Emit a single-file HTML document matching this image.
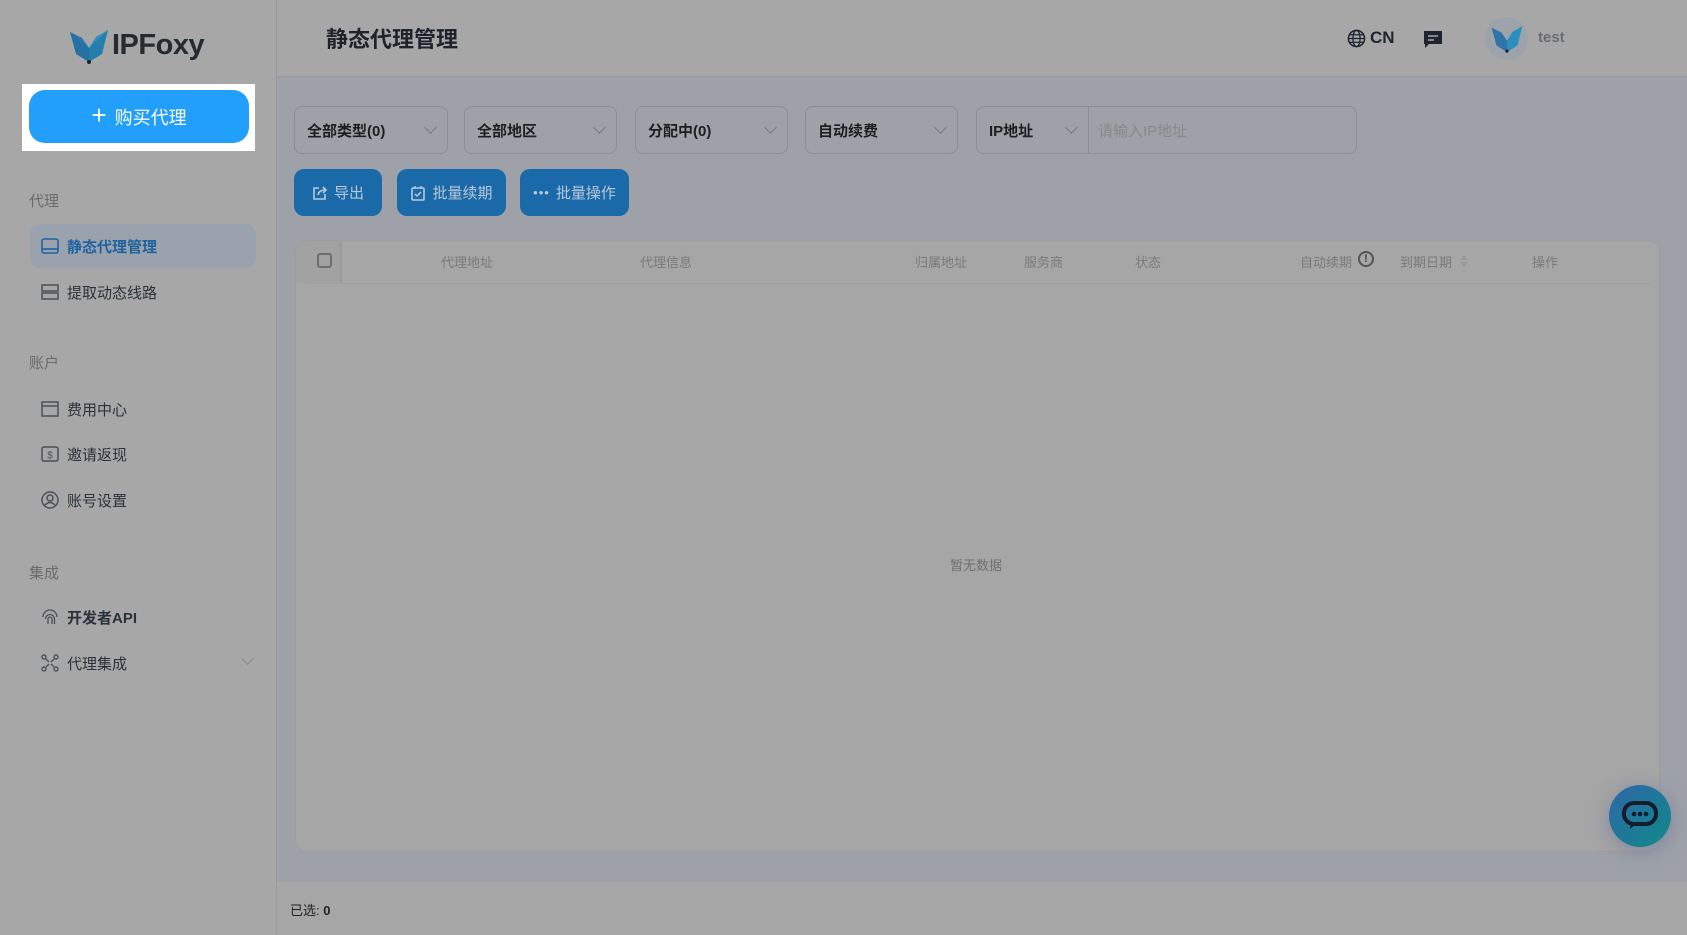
<!DOCTYPE html>
<html><head><meta charset="utf-8"><style>
*{box-sizing:border-box;margin:0;padding:0}
body{width:1687px;height:935px;overflow:hidden;background:#9ea2a8;font-family:"Liberation Sans","Noto Sans CJK SC",sans-serif;position:relative;color:#2a2f36}
.abs{position:absolute}
.side{left:0;top:0;width:277px;height:935px;background:#a7a7a7;border-right:1px solid #999}
.head{left:277px;top:0;width:1410px;height:77px;background:#a7a7a7;border-bottom:1px solid #9a9a9a}
.lbl{font-size:15px;color:#6b6b6b;left:29px}
.mi{left:30px;width:226px;height:44px;font-size:15px;color:#2b313a;display:flex;align-items:center;padding-left:10px;gap:7px}
.mi svg{width:20px;height:20px}
.sel{background:#fff0;border:1px solid #8e8e8e;border-radius:8px;height:48px;top:106px;display:flex;align-items:center;padding:0 12px;font-size:15px;color:#1e1e1e;font-weight:600;justify-content:space-between}
.chev{width:9px;height:9px;border-right:1.5px solid #777;border-bottom:1.5px solid #777;transform:rotate(45deg);margin-top:-5px}
.btn{top:169px;height:47px;border-radius:10px;background:#1a69a8;color:#b9c9d8;font-size:15px;display:flex;align-items:center;justify-content:center;gap:6px}
.th{top:252px;font-size:13px;color:#7a7a7a}
</style></head><body>
<div class="abs side"></div>
<svg class="abs" style="left:68px;top:28px" width="42" height="36" viewBox="0 0 42 36"><path d="M2 4 L14 10 L21 20 L21 34 L8 26 Z" fill="#2f73a8"/><path d="M40 2 L28 9 L21 20 L21 34 L34 26 Z" fill="#2a8fc0"/><path d="M2 4 L21 20 L40 2 L34 26 L21 34 L8 26Z" fill="#1d6f9e" opacity=".5"/><circle cx="21" cy="34" r="2" fill="#222"/></svg>
<div class="abs" style="left:112px;top:29px;font-size:29px;font-weight:900;color:#262a31;letter-spacing:-0.5px">IPFoxy</div>
<div class="abs" style="left:22px;top:84px;width:233px;height:67px;background:#fff"></div>
<div class="abs" style="left:29px;top:90px;width:220px;height:53px;background:#229ffa;border-radius:16px;color:#fff;font-size:18px;display:flex;align-items:center;justify-content:center;gap:8px"><span style="font-size:26px;font-weight:300;line-height:1;margin-top:-3px">+</span>购买代理</div>
<div class="abs lbl" style="top:190px">代理</div>
<div class="abs mi" style="top:224px;background:#9aa3ad;border-radius:10px;color:#1f62a0;font-weight:bold"><svg viewBox="0 0 20 20"><rect x="2" y="3" width="16" height="14" rx="2" fill="none" stroke="#1f62a0" stroke-width="1.6"/><line x1="2" y1="13" x2="18" y2="13" stroke="#1f62a0" stroke-width="1.6"/></svg>静态代理管理</div>
<div class="abs mi" style="top:270px"><svg viewBox="0 0 20 20"><rect x="2" y="3" width="16" height="6" fill="none" stroke="#4a5058" stroke-width="1.5"/><rect x="2" y="11" width="16" height="6" fill="none" stroke="#4a5058" stroke-width="1.5"/></svg>提取动态线路</div>
<div class="abs lbl" style="top:352px">账户</div>
<div class="abs mi" style="top:387px"><svg viewBox="0 0 20 20"><rect x="2" y="3" width="16" height="14" fill="none" stroke="#4a5058" stroke-width="1.5"/><line x1="2" y1="7" x2="18" y2="7" stroke="#4a5058" stroke-width="1.5"/></svg>费用中心</div>
<div class="abs mi" style="top:432px"><svg viewBox="0 0 20 20"><rect x="2" y="3" width="16" height="14" rx="2" fill="none" stroke="#4a5058" stroke-width="1.5"/><text x="10" y="14.5" font-size="10" text-anchor="middle" fill="#4a5058" font-family="Liberation Sans">$</text></svg>邀请返现</div>
<div class="abs mi" style="top:478px"><svg viewBox="0 0 20 20"><circle cx="10" cy="10" r="8" fill="none" stroke="#4a5058" stroke-width="1.5"/><circle cx="10" cy="8" r="3" fill="none" stroke="#4a5058" stroke-width="1.5"/><path d="M5 15 Q10 10 15 15" fill="none" stroke="#4a5058" stroke-width="1.5"/></svg>账号设置</div>
<div class="abs lbl" style="top:562px">集成</div>
<div class="abs mi" style="top:595px;font-weight:bold"><svg viewBox="0 0 20 20"><path d="M3 10a7 7 0 0 1 14 0M5.5 12a4.5 4.5 0 0 1 9 0v5M8 17v-5a2 2 0 0 1 4 0v5" fill="none" stroke="#4a5058" stroke-width="1.3"/></svg>开发者API</div>
<div class="abs mi" style="top:641px"><svg viewBox="0 0 20 20"><circle cx="4" cy="4" r="2" fill="none" stroke="#4a5058" stroke-width="1.4"/><circle cx="16" cy="4" r="2" fill="none" stroke="#4a5058" stroke-width="1.4"/><circle cx="4" cy="16" r="2" fill="none" stroke="#4a5058" stroke-width="1.4"/><circle cx="16" cy="16" r="2" fill="none" stroke="#4a5058" stroke-width="1.4"/><path d="M6 6l3 3M14 6l-3 3M6 14l3-3M14 14l-3-3" stroke="#4a5058" stroke-width="1.4"/></svg>代理集成</div>
<div class="abs chev" style="left:243px;top:659px;border-color:#888"></div>

<div class="abs head"></div>
<div class="abs" style="left:326px;top:22px;font-size:22px;font-weight:bold;color:#1e232b">静态代理管理</div>
<svg class="abs" style="left:1347px;top:29px" width="19" height="19" viewBox="0 0 20 20"><circle cx="10" cy="10" r="8.5" fill="none" stroke="#1e2530" stroke-width="1.6"/><ellipse cx="10" cy="10" rx="3.8" ry="8.5" fill="none" stroke="#1e2530" stroke-width="1.4"/><path d="M1.5 10h17M3 6h14M3 14h14" stroke="#1e2530" stroke-width="1.3"/></svg>
<div class="abs" style="left:1370px;top:28px;font-size:17px;font-weight:bold;color:#1e2530">CN</div>
<svg class="abs" style="left:1422px;top:29px" width="22" height="20" viewBox="0 0 22 20"><path d="M2 2h18v13H7l-4 4V15H2Z" fill="#1e2530"/><path d="M6 7h10M6 11h6" stroke="#a7a7a7" stroke-width="1.6"/></svg>
<div class="abs" style="left:1485px;top:17px;width:43px;height:43px;border-radius:50%;background:#9ca3ab"></div>
<svg class="abs" style="left:1490px;top:24px" width="34" height="30" viewBox="0 0 42 36"><path d="M2 4 L14 10 L21 20 L21 34 L8 26 Z" fill="#2f73a8"/><path d="M40 2 L28 9 L21 20 L21 34 L34 26 Z" fill="#2a8fc0"/><circle cx="21" cy="33" r="2" fill="#222"/></svg>
<div class="abs" style="left:1538px;top:29px;font-size:15px;color:#6a6d72;font-weight:bold">test</div>

<div class="abs sel" style="left:294px;width:154px">全部类型(0)<span class="chev"></span></div>
<div class="abs sel" style="left:464px;width:153px">全部地区<span class="chev"></span></div>
<div class="abs sel" style="left:635px;width:153px">分配中(0)<span class="chev"></span></div>
<div class="abs sel" style="left:805px;width:153px">自动续费<span class="chev"></span></div>
<div class="abs sel" style="left:976px;width:381px;padding:0"><div style="width:112px;height:100%;border-right:1px solid #8e8e8e;display:flex;align-items:center;justify-content:space-between;padding:0 12px">IP地址<span class="chev"></span></div><div style="flex:1;padding-left:9px;color:#888;font-weight:normal">请输入IP地址</div></div>

<div class="abs btn" style="left:294px;width:88px"><svg width="16" height="16" viewBox="0 0 16 16"><path d="M7 3H2v11h11V9" fill="none" stroke="#b9c9d8" stroke-width="1.6"/><path d="M6 10q1-5 7-5M11 2l3 3-3 3" fill="none" stroke="#b9c9d8" stroke-width="1.6"/></svg>导出</div>
<div class="abs btn" style="left:397px;width:109px"><svg width="16" height="16" viewBox="0 0 16 16"><rect x="2" y="3" width="12" height="12" rx="1" fill="none" stroke="#b9c9d8" stroke-width="1.6"/><path d="M5 1v3M11 1v3M5 9l2 2 4-4" fill="none" stroke="#b9c9d8" stroke-width="1.5"/></svg>批量续期</div>
<div class="abs btn" style="left:520px;width:109px"><span style="font-size:13px;letter-spacing:1px">•••</span>批量操作</div>

<div class="abs" style="left:295px;top:240px;width:1365px;height:612px;background:#a6a6a6;border-radius:12px;border:1px solid #9e9e9e"></div>
<div class="abs" style="left:296px;top:241px;width:46px;height:42px;background:#a2a2a2;border-right:3px solid #9d9d9d;border-top-left-radius:12px"></div>
<div class="abs" style="left:317px;top:253px;width:15px;height:15px;border:2px solid #6e6e6e;border-radius:3px"></div>
<div class="abs" style="left:305px;top:283px;width:1345px;height:1px;background:#9f9f9f"></div>
<div class="abs th" style="left:441px">代理地址</div>
<div class="abs th" style="left:640px">代理信息</div>
<div class="abs th" style="left:915px">归属地址</div>
<div class="abs th" style="left:1024px">服务商</div>
<div class="abs th" style="left:1135px">状态</div>
<div class="abs th" style="left:1300px">自动续期</div>
<div class="abs" style="left:1358px;top:251px;width:16px;height:16px;border:2px solid #555;border-radius:50%;font-size:11px;font-weight:bold;text-align:center;line-height:12px;color:#444">!</div>
<div class="abs th" style="left:1400px">到期日期</div>
<div class="abs" style="left:1460px;top:255px;width:0;height:0;border:4px solid transparent;border-bottom:5px solid #999;border-top:0"></div>
<div class="abs" style="left:1460px;top:262px;width:0;height:0;border:4px solid transparent;border-top:5px solid #999;border-bottom:0"></div>
<div class="abs th" style="left:1532px">操作</div>
<div class="abs" style="left:950px;top:555px;font-size:13px;color:#6f6f6f">暂无数据</div>

<div class="abs" style="left:277px;top:882px;width:1410px;height:53px;background:#a6a6a6"></div>
<div class="abs" style="left:290px;top:900px;font-size:13px;color:#222">已选: <b>0</b></div>

<div class="abs" style="left:1609px;top:785px;width:62px;height:62px;border-radius:50%;background:linear-gradient(135deg,#2f66a8,#0f8a8a);box-shadow:0 4px 20px rgba(60,70,150,.35)"></div>
<svg class="abs" style="left:1621px;top:800px" width="38" height="32" viewBox="0 0 38 32"><rect x="3" y="3" width="32" height="21" rx="10" fill="none" stroke="#151d2a" stroke-width="4"/><path d="M10 22l-1 7 6-5z" fill="#151d2a"/><circle cx="13" cy="14" r="2.3" fill="#151d2a"/><circle cx="19" cy="14" r="2.3" fill="#151d2a"/><circle cx="25" cy="14" r="2.3" fill="#151d2a"/></svg>
</body></html>
